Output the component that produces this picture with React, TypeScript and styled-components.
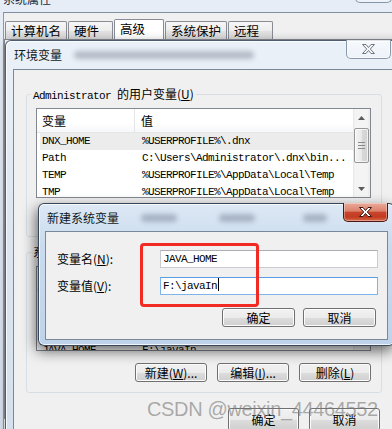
import { createGlobalStyle, styled } from 'styled-components';

const CJK = '"Noto Sans CJK SC", "Liberation Sans", sans-serif';
const MONO = '"Liberation Mono", "DejaVu Sans Mono", monospace';

const GlobalStyle = createGlobalStyle`
  html, body { margin: 0; padding: 0; }
  body {
    width: 392px;
    height: 429px;
    overflow: hidden;
    background: #f0f0f0;
    color: #000;
    font-family: ${CJK};
    font-size: 12px;
  }
  * { box-sizing: border-box; }
`;

// back window: 系统属性, fills the whole shot
const Desktop = styled.div`
  position: relative;
  width: 392px;
  height: 429px;
  overflow: hidden;
  display: flex;
  flex-direction: column;
  padding-left: 3px;
  background: linear-gradient(180deg, #e6edf6, #d6e1ee);
`;

const BackTitleBar = styled.div`
  height: 12px;
  flex: none;
  display: flex;
  justify-content: space-between;
  align-items: flex-start;
  overflow: hidden;
`;

const BackTitle = styled.span`
  margin-top: -9px;
  line-height: 16px;
  color: #1e2b3a;
`;

const GhostClose = styled.div`
  width: 37px;
  height: 20px;
  margin-top: -17px;
  border: 1px solid #8695a8;
  border-top: none;
  border-radius: 0 0 5px 5px;
  background: rgba(255, 255, 255, 0.35);
`;

const BackClient = styled.div`
  flex: 1;
  border-top: 1px solid #7f8ea1;
  border-left: 1px solid #8d99a8;
  background: #f0f0f0;
  padding-top: 6px;
`;

const TabStrip = styled.div`
  display: flex;
  align-items: flex-end;
  gap: 1px;
  height: 20px;
  padding-left: 1px;
`;

const Tab = styled.div<{ $active?: boolean }>`
  min-width: ${(p) => (p.$active ? 50 : 45)}px;
  height: ${(p) => (p.$active ? 20 : 18)}px;
  padding: 0 5px;
  border: 1px solid #898c95;
  border-bottom: none;
  border-radius: 2px 2px 0 0;
  background: ${(p) => (p.$active ? '#fff' : 'linear-gradient(#f6f6f6, #ededed 50%, #e3e3e3 51%, #d9d9d9)')};
  font-size: 12.5px;
  line-height: 17px;
  white-space: nowrap;
`;

const TabPanel = styled.div`
  height: 380px;
  border: 1px solid #898c95;
  background: #fff;
`;

// shared window chrome
const EnvWindow = styled.div`
  position: absolute;
  left: 5px;
  top: 40px;
  z-index: 1;
  width: 400px;
  height: 420px;
  display: flex;
  flex-direction: column;
  padding: 0 7px;
  border: 1px solid rgba(45, 60, 80, 0.8);
  border-radius: 6px 6px 0 0;
  background: linear-gradient(180deg, #ebf1f8 0%, #dde7f2 40%, #d3dfed 100%);
  box-shadow: inset 1px 1px 0 rgba(255, 255, 255, 0.8), 0 0 8px rgba(0, 0, 0, 0.25);
`;

const TitleBar = styled.div<{ $h: number; $pad: number }>`
  height: ${(p) => p.$h}px;
  flex: none;
  display: flex;
  justify-content: space-between;
  align-items: flex-start;
  padding-left: ${(p) => p.$pad}px;
`;

const TitleGroup = styled.div`
  display: flex;
  align-items: center;
  padding-top: 6px;
`;

const TitleText = styled.span`
  line-height: 16px;
  color: #101820;
`;

// blurred background showing through the glass caption
const Smudge = styled.span<{ $gap: number; $w: number }>`
  width: ${(p) => p.$w}px;
  height: 8px;
  margin-left: ${(p) => p.$gap}px;
  border-radius: 4px;
  background: rgba(40, 55, 75, 0.28);
  filter: blur(2.5px);
`;

const CloseBox = styled.div<{ $red?: boolean; $right: number }>`
  width: 45px;
  height: 19px;
  margin-top: -1px;
  margin-right: ${(p) => p.$right}px;
  display: flex;
  align-items: center;
  justify-content: center;
  border: 1px solid ${(p) => (p.$red ? '#4a1a12' : '#8b98a9')};
  border-top: none;
  border-radius: 0 0 5px 5px;
  background: ${(p) =>
    p.$red
      ? 'linear-gradient(180deg, #e9aa9b 0%, #dc826c 45%, #c8442b 52%, #c23b21 78%, #d86a4c 100%)'
      : 'linear-gradient(180deg, rgba(255,255,255,0.55), rgba(255,255,255,0.2))'};
  box-shadow: inset 0 0 0 1px rgba(255, 255, 255, ${(p) => (p.$red ? 0.35 : 0.6)});
`;

const Client = styled.div`
  position: relative;
  border: 1px solid #7b8899;
  background: #f0f0f0;
`;

const EnvClient = styled(Client)`
  flex: 1;
  padding: 0 14px 0 12px;
`;

const GroupBox = styled.fieldset<{ $top: number }>`
  margin: ${(p) => p.$top}px 0 0;
  padding: 0;
  min-width: 0;
  border: 1px solid #d5dfe5;
  border-radius: 3px;
`;

const GroupLabel = styled.legend`
  height: 16px;
  margin-left: 4px;
  padding: 0 2px;
  line-height: 16px;
  white-space: nowrap;
`;

const GroupBody = styled.div`
  padding: 6px 10px 10px 9px;
`;

const Mono = styled.span`
  font-family: ${MONO};
  font-size: 11px;
  letter-spacing: -0.6px;
  line-height: 1;
`;

const Key = styled.u`
  text-underline-offset: 1px;
`;

const ListBox = styled.div<{ $h: number }>`
  display: flex;
  height: ${(p) => p.$h}px;
  border: 1px solid #828790;
  background: #fff;
  overflow: hidden;
`;

const ListMain = styled.div`
  flex: 1;
  min-width: 0;
`;

const HeaderRow = styled.div`
  display: grid;
  grid-template-columns: 98px 1fr;
  height: 24px;
  border-bottom: 1px solid #e5e5e5;
  background: linear-gradient(#fff, #fff 60%, #f6f7f9);
  line-height: 23px;
`;

const HeaderCell = styled.div<{ $first?: boolean }>`
  padding-left: ${(p) => (p.$first ? 5 : 6)}px;
  border-right: ${(p) => (p.$first ? '1px solid #e5e5e5' : 'none')};
`;

const DataRow = styled.div<{ $selected?: boolean }>`
  display: grid;
  grid-template-columns: 98px 1fr;
  height: 17px;
  margin-left: 3px;
  background: ${(p) => (p.$selected ? '#ececec' : 'transparent')};
  font-family: ${MONO};
  font-size: 11px;
  letter-spacing: -0.6px;
  line-height: 17px;
  white-space: nowrap;
  overflow: hidden;
`;

const NameCell = styled.div`
  padding-left: 2px;
`;

const ValueCell = styled.div`
  padding-left: 4px;
  overflow: hidden;
`;

const ScrollBar = styled.div`
  width: 17px;
  flex: none;
  display: flex;
  flex-direction: column;
  background: linear-gradient(90deg, #e6e6e6 0, #f4f4f4 2px, #f4f4f4 14px, #ebebeb 17px);
`;

const ArrowBox = styled.div`
  height: 17px;
  flex: none;
  display: flex;
  align-items: center;
  justify-content: center;
`;

const Thumb = styled.div`
  height: 35px;
  margin: 2px 1px 0;
  display: flex;
  align-items: center;
  justify-content: center;
  border: 1px solid #979797;
  border-radius: 2px;
  background: linear-gradient(90deg, #f4f4f4, #e9e9e9 50%, #d9d9d9 51%, #d2d2d2);
  box-shadow: inset 0 0 0 1px rgba(255, 255, 255, 0.7);
`;

const Spacer = styled.div`
  flex: 1;
`;

const ButtonRow = styled.div<{ $top: number; $gap: number; $right?: number }>`
  display: flex;
  justify-content: flex-end;
  gap: ${(p) => p.$gap}px;
  margin-top: ${(p) => p.$top}px;
  padding-right: ${(p) => p.$right ?? 0}px;
`;

const WinButton = styled.button<{ $w: number; $h?: number }>`
  width: ${(p) => p.$w}px;
  height: ${(p) => p.$h ?? 19}px;
  padding: 0;
  border: 1px solid #707070;
  border-radius: 3px;
  background: linear-gradient(#f2f2f2 0%, #ebebeb 50%, #dddddd 51%, #cfcfcf 100%);
  box-shadow: inset 0 0 0 1px #fcfcfc;
  color: #000;
  font-family: ${CJK};
  font-size: 12px;
  line-height: 16px;
`;

// new variable dialog
const Dialog = styled.div`
  position: absolute;
  left: 38px;
  top: 203px;
  z-index: 2;
  width: 357px;
  height: 143px;
  display: flex;
  flex-direction: column;
  padding: 0 6px 5px;
  border: 1px solid rgba(30, 45, 65, 0.85);
  border-radius: 6px;
  background: linear-gradient(180deg, #dde8f4 0%, #cadbee 30%, #bed3ea 100%);
  box-shadow: inset 0 0 0 1px rgba(255, 255, 255, 0.75), -2px 5px 14px rgba(0, 0, 0, 0.6);
`;

const DialogClient = styled(Client)`
  height: 109px;
  padding: 18px 9px 12px 11px;
`;

const FormGrid = styled.div`
  display: grid;
  grid-template-columns: 103px 1fr;
  row-gap: 9px;
  align-items: center;
`;

const FieldLabel = styled.div`
  height: 18px;
  line-height: 18px;
  white-space: nowrap;
`;

const TextBox = styled.div<{ $focused?: boolean }>`
  height: 18px;
  padding-left: 2px;
  border: 1px solid ${(p) => (p.$focused ? '#7eb4ea' : '#c9cbd1')};
  border-top-color: ${(p) => (p.$focused ? '#569de5' : '#abadb3')};
  background: #fff;
  font-family: ${MONO};
  font-size: 11px;
  letter-spacing: -0.6px;
  line-height: 16px;
  white-space: nowrap;
`;

const Caret = styled.span`
  display: inline-block;
  width: 1px;
  height: 13px;
  margin-left: 1px;
  vertical-align: -2px;
  background: #000;
`;

const Annotation = styled.div`
  position: absolute;
  left: 94px;
  top: 11px;
  width: 119px;
  height: 64px;
  border: 3px solid #f22a24;
  border-radius: 4px;
`;

const Watermark = styled.div`
  position: absolute;
  left: 147px;
  top: 397px;
  z-index: 3;
  font-family: "Liberation Sans", Arial, sans-serif;
  font-size: 20px;
  letter-spacing: -0.35px;
  line-height: 24px;
  color: rgba(120, 120, 120, 0.6);
  white-space: nowrap;
`;

interface EnvVar {
  name: string;
  value: string;
  selected?: boolean;
}

const userVars: EnvVar[] = [
  { name: 'DNX_HOME', value: '%USERPROFILE%\\.dnx', selected: true },
  { name: 'Path', value: 'C:\\Users\\Administrator\\.dnx\\bin...' },
  { name: 'TEMP', value: '%USERPROFILE%\\AppData\\Local\\Temp' },
  { name: 'TMP', value: '%USERPROFILE%\\AppData\\Local\\Temp' },
];

const systemVars: EnvVar[] = [
  { name: 'asl.log', value: 'Destination=file' },
  { name: 'ComSpec', value: 'C:\\Windows\\system32\\cmd.exe' },
  { name: 'FP_NO_HOST_CHECK', value: 'NO' },
  { name: 'JAVA_HOME', value: 'F:\\javaIn' },
];

const tabs = ['计算机名', '硬件', '高级', '系统保护', '远程'];

function CloseGlyph({ fill, stroke }: { fill: string; stroke: string }) {
  return (
    <svg width="15" height="12" viewBox="0 0 15 12">
      <path
        d="M1.5 1.5h3.5l2.5 3 2.5-3h3.5l-4.2 4.5 4.2 4.5h-3.5l-2.5-3-2.5 3h-3.5l4.2-4.5z"
        fill={fill}
        stroke={stroke}
        strokeWidth="1"
        strokeLinejoin="round"
      />
    </svg>
  );
}

function Arrow({ down }: { down?: boolean }) {
  return (
    <svg width="7" height="4" viewBox="0 0 7 4">
      <path d={down ? 'M0 0h7L3.5 4z' : 'M0 4h7L3.5 0z'} fill="#5b5b5b" />
    </svg>
  );
}

function Grip() {
  return (
    <svg width="7" height="7" viewBox="0 0 7 7">
      <path d="M0 0.5h7M0 3.5h7M0 6.5h7" stroke="#8a8a8a" strokeWidth="1" />
    </svg>
  );
}

function VarList({ rows, height, thumb }: { rows: EnvVar[]; height: number; thumb?: boolean }) {
  return (
    <ListBox $h={height}>
      <ListMain>
        <HeaderRow>
          <HeaderCell $first>变量</HeaderCell>
          <HeaderCell>值</HeaderCell>
        </HeaderRow>
        {rows.map((row) => (
          <DataRow key={row.name} $selected={row.selected}>
            <NameCell>{row.name}</NameCell>
            <ValueCell>{row.value}</ValueCell>
          </DataRow>
        ))}
      </ListMain>
      <ScrollBar>
        <ArrowBox>
          <Arrow />
        </ArrowBox>
        {thumb && (
          <Thumb>
            <Grip />
          </Thumb>
        )}
        <Spacer />
        <ArrowBox>
          <Arrow down />
        </ArrowBox>
      </ScrollBar>
    </ListBox>
  );
}

function GroupButtons({ top }: { top: number }) {
  return (
    <ButtonRow $top={top} $gap={10}>
      <WinButton $w={72}>
        新建(<Key>W</Key>)...
      </WinButton>
      <WinButton $w={72}>
        编辑(<Key>I</Key>)...
      </WinButton>
      <WinButton $w={72}>
        删除(<Key>L</Key>)
      </WinButton>
    </ButtonRow>
  );
}

export default function App() {
  return (
    <>
      <GlobalStyle />
      <Desktop>
        <BackTitleBar>
          <BackTitle>系统属性</BackTitle>
          <GhostClose />
        </BackTitleBar>
        <BackClient>
          <TabStrip>
            {tabs.map((t) => (
              <Tab key={t} $active={t === '高级'}>
                {t}
              </Tab>
            ))}
          </TabStrip>
          <TabPanel />
        </BackClient>

        <EnvWindow>
          <TitleBar $h={28} $pad={1}>
            <TitleGroup>
              <TitleText>环境变量</TitleText>
              <Smudge $gap={12} $w={180} />
            </TitleGroup>
            <CloseBox $right={6}>
              <CloseGlyph fill="#f6f6f6" stroke="#6c7886" />
            </CloseBox>
          </TitleBar>
          <EnvClient>
            <GroupBox $top={16}>
              <GroupLabel>
                <Mono>Administrator </Mono>的用户变量(<Key>U</Key>)
              </GroupLabel>
              <GroupBody>
                <VarList rows={userVars} height={90} thumb />
                <GroupButtons top={9} />
              </GroupBody>
            </GroupBox>
            <GroupBox $top={7}>
              <GroupLabel>
                系统变量(<Key>S</Key>)
              </GroupLabel>
              <GroupBody>
                <VarList rows={systemVars} height={85} />
                <GroupButtons top={12} />
              </GroupBody>
            </GroupBox>
            <ButtonRow $top={15} $gap={10} $right={2}>
              <WinButton $w={71} $h={23}>
                确定
              </WinButton>
              <WinButton $w={71} $h={23}>
                取消
              </WinButton>
            </ButtonRow>
          </EnvClient>
        </EnvWindow>

        <Dialog>
          <TitleBar $h={27} $pad={2}>
            <TitleGroup>
              <TitleText>新建系统变量</TitleText>
              <Smudge $gap={22} $w={36} />
              <Smudge $gap={42} $w={36} />
              <Smudge $gap={48} $w={24} />
            </TitleGroup>
            <CloseBox $red $right={0}>
              <CloseGlyph fill="#ffffff" stroke="#3b1510" />
            </CloseBox>
          </TitleBar>
          <DialogClient>
            <FormGrid>
              <FieldLabel>
                变量名(<Key>N</Key>):
              </FieldLabel>
              <TextBox>JAVA_HOME</TextBox>
              <FieldLabel>
                变量值(<Key>V</Key>):
              </FieldLabel>
              <TextBox $focused>
                F:\javaIn
                <Caret />
              </TextBox>
            </FormGrid>
            <ButtonRow $top={13} $gap={8} $right={2}>
              <WinButton $w={73}>确定</WinButton>
              <WinButton $w={73}>取消</WinButton>
            </ButtonRow>
            <Annotation />
          </DialogClient>
        </Dialog>

        <Watermark>CSDN @weixin_44464552</Watermark>
      </Desktop>
    </>
  );
}
